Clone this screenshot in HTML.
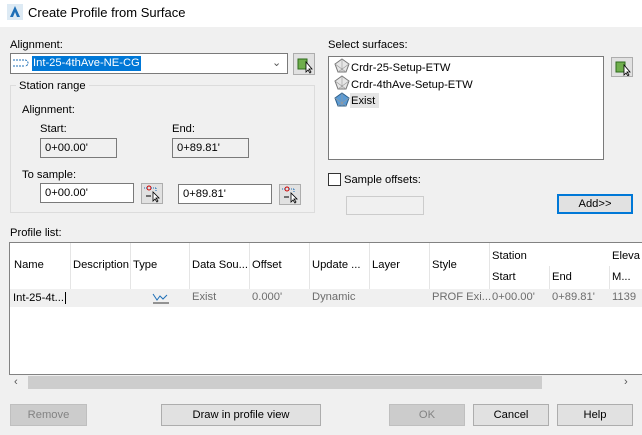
<!DOCTYPE html>
<html><head><style>
*{box-sizing:border-box;margin:0;padding:0}
body{width:642px;height:435px;background:#f0f0f0;font-family:"Liberation Sans",sans-serif;font-size:11.2px;color:#000;position:relative;overflow:hidden}
.a{position:absolute;white-space:nowrap}
.box{position:absolute;border:1px solid #7a7a7a;background:#fff}
.ro{position:absolute;border:1px solid #7a7a7a;background:#f0f0f0;padding:3px 0 0 4px}
.in{position:absolute;border:1px solid #7a7a7a;background:#fff;padding:3px 0 0 4px}
.btn{position:absolute;border:1px solid #adadad;background:#e1e1e1;text-align:center;line-height:20px}
.dis{color:#838383;background:#cccccc;border-color:#bfbfbf}
.ib{position:absolute;border:1px solid #adadad;background:#e1e1e1}
.th{position:absolute;top:0;height:46px;border-right:1px solid #e5e5e5}
.hl{position:absolute;top:16px}
.cell{position:absolute;top:48px;color:#6d6d6d}
</style></head><body>
<div class="a" style="left:0;top:0;width:642px;height:27px;background:#fff"></div>
<svg class="a" style="left:7px;top:4px" width="16" height="16"><rect width="16" height="16" fill="#1e6fb7" opacity=".15"/><path d="M3 13 L8 2 L13 13 L10 13 L8 8 L6 13Z" fill="#1e6fb7"/></svg>
<div class="a" style="left:28px;top:5px;font-size:13px">Create Profile from Surface</div>

<div class="a" style="left:10px;top:39px">Alignment:</div>
<div class="box" style="left:10px;top:53px;width:278px;height:21px"></div>
<svg class="a" style="left:13px;top:58px" width="18" height="10"><path d="M0 2H12M0 8H12M12 2A3 3 0 0 1 12 8" stroke="#1e6fb7" fill="none" stroke-dasharray="2 1"/></svg>
<div class="a" style="left:32px;top:56px;background:#0078d7;color:#fff;padding:0 1px;height:15px;line-height:15px">Int-25-4thAve-NE-CG</div>
<div class="a" style="left:272px;top:56px;color:#555">&#8964;</div>
<div class="ib" style="left:293px;top:53px;width:22px;height:22px"><svg width="20" height="20"><rect x="4" y="5" width="9" height="10" fill="#6fae4c" stroke="#2d6a1c"/><path d="M12 8 L12 18 L14 16 L16 19 L17 18 L15 15 L18 15Z" fill="#fff" stroke="#000" stroke-width=".8"/></svg></div>

<div class="a" style="left:10px;top:85px;width:305px;height:128px;border:1px solid #dcdcdc"></div>
<div class="a" style="left:16px;top:80px;background:#f0f0f0;padding:0 3px">Station range</div>
<div class="a" style="left:22px;top:104px">Alignment:</div>
<div class="a" style="left:40px;top:123px">Start:</div>
<div class="a" style="left:172px;top:123px">End:</div>
<div class="ro" style="left:40px;top:138px;width:77px;height:20px">0+00.00'</div>
<div class="ro" style="left:172px;top:138px;width:77px;height:20px">0+89.81'</div>
<div class="a" style="left:22px;top:169px">To sample:</div>
<div class="in" style="left:40px;top:183px;width:94px;height:20px">0+00.00'</div>
<div class="in" style="left:178px;top:184px;width:94px;height:20px">0+89.81'</div>
<div class="ib" style="left:141px;top:183px;width:22px;height:21px"><svg width="20" height="19"><circle cx="7" cy="4" r="2" fill="none" stroke="#c00"/><path d="M2 4H5M9 4H14M14 4V8" stroke="#1e6fb7" stroke-dasharray="1 1"/><path d="M4 12H9" stroke="#000"/><path d="M11 8V17L13 15 15 18 16 17 14 14H17Z" fill="#fff" stroke="#000" stroke-width=".8"/></svg></div>
<div class="ib" style="left:279px;top:184px;width:22px;height:21px"><svg width="20" height="19"><circle cx="7" cy="4" r="2" fill="none" stroke="#c00"/><path d="M2 4H5M9 4H14M14 4V8" stroke="#1e6fb7" stroke-dasharray="1 1"/><path d="M4 12H9" stroke="#000"/><path d="M11 8V17L13 15 15 18 16 17 14 14H17Z" fill="#fff" stroke="#000" stroke-width=".8"/></svg></div>

<div class="a" style="left:328px;top:39px">Select surfaces:</div>
<div class="box" style="left:328px;top:56px;width:276px;height:104px"></div>
<svg class="a" style="left:334px;top:58px" width="16" height="50"><g fill="#e6e6e6" stroke="#777"><path d="M8 1L15 6 12 14H4L1 6Z"/><path d="M8 18L15 23 12 31H4L1 23Z"/></g><path d="M8 35L15 40 12 48H4L1 40Z" fill="#5b9bd5" stroke="#2e5f8a"/><path d="M8 1V14M1 6L12 14M15 6L4 14M8 18V31M1 23L12 31M15 23L4 31M8 35V48M1 40L12 48M15 40L4 48" stroke="#999" stroke-width=".6"/></svg>
<div class="a" style="left:351px;top:62px">Crdr-25-Setup-ETW</div>
<div class="a" style="left:351px;top:79px">Crdr-4thAve-Setup-ETW</div>
<div class="a" style="left:350px;top:93px;background:#e5e5e5;padding:2px 4px 1px 1px">Exist</div>
<div class="ib" style="left:611px;top:57px;width:22px;height:20px"><svg width="20" height="18"><rect x="4" y="4" width="9" height="10" fill="#6fae4c" stroke="#2d6a1c"/><path d="M12 7 L12 17 L14 15 L16 18 L17 17 L15 14 L18 14Z" fill="#fff" stroke="#000" stroke-width=".8"/></svg></div>

<div class="a" style="left:328px;top:173px;width:13px;height:13px;border:1px solid #333;background:#fff"></div>
<div class="a" style="left:344px;top:174px">Sample offsets:</div>
<div class="a" style="left:346px;top:196px;width:78px;height:19px;border:1px solid #ccc;background:#f0f0f0"></div>
<div class="btn" style="left:557px;top:194px;width:76px;height:20px;border:2px solid #0078d7;line-height:16px">Add&gt;&gt;</div>

<div class="a" style="left:10px;top:227px">Profile list:</div>
<div class="a" style="left:9px;top:242px;width:640px;height:133px;border:1px solid #828282;border-right:none;background:#fff;overflow:hidden">
 <div class="th" style="left:0;width:61px"><span class="hl" style="left:4px">Name</span></div>
 <div class="th" style="left:61px;width:60px"><span class="hl" style="left:2px">Description</span></div>
 <div class="th" style="left:121px;width:59px"><span class="hl" style="left:2px">Type</span></div>
 <div class="th" style="left:180px;width:60px"><span class="hl" style="left:2px">Data Sou...</span></div>
 <div class="th" style="left:240px;width:60px"><span class="hl" style="left:2px">Offset</span></div>
 <div class="th" style="left:300px;width:60px"><span class="hl" style="left:2px">Update ...</span></div>
 <div class="th" style="left:360px;width:60px"><span class="hl" style="left:2px">Layer</span></div>
 <div class="th" style="left:420px;width:60px"><span class="hl" style="left:2px">Style</span></div>
 <div class="th" style="left:480px;width:120px;border-right:none"><span class="a" style="left:2px;top:7px">Station</span></div>
 <div class="th" style="left:480px;top:23px;height:23px;width:60px"><span class="a" style="left:2px;top:5px">Start</span></div>
 <div class="th" style="left:540px;top:23px;height:23px;width:60px"><span class="a" style="left:2px;top:5px">End</span></div>
 <div class="th" style="left:600px;width:60px;border-right:none"><span class="a" style="left:2px;top:7px">Eleva</span><span class="a" style="left:2px;top:28px">M...</span></div>
 <div class="a" style="left:0;top:46px;width:640px;height:18px;background:#f0f0f0"></div>
 <div class="a" style="left:3px;top:49px;border-right:1px solid #000;padding-right:1px">Int-25-4t...</div>
 <svg class="a" style="left:142px;top:49px" width="18" height="12"><path d="M1 2L5 8 8 4 11 7 15 3" stroke="#1e6fb7" fill="none"/><path d="M1 11H17" stroke="#333"/></svg>
 <span class="cell" style="left:182px">Exist</span>
 <span class="cell" style="left:242px">0.000'</span>
 <span class="cell" style="left:302px">Dynamic</span>
 <span class="cell" style="left:422px">PROF Exi...</span>
 <span class="cell" style="left:482px">0+00.00'</span>
 <span class="cell" style="left:542px">0+89.81'</span>
 <span class="cell" style="left:602px">1139</span>
</div>
<div class="a" style="left:9px;top:375px;width:633px;height:15px;background:#f0f0f0"></div>
<div class="a" style="left:14px;top:376px;color:#555">&#8249;</div>
<div class="a" style="left:28px;top:376px;width:514px;height:13px;background:#cdcdcd"></div>
<div class="a" style="left:624px;top:376px;color:#555">&#8250;</div>

<div class="btn dis" style="left:10px;top:404px;width:77px;height:22px">Remove</div>
<div class="btn" style="left:161px;top:404px;width:160px;height:22px">Draw in profile view</div>
<div class="btn dis" style="left:389px;top:404px;width:76px;height:22px">OK</div>
<div class="btn" style="left:473px;top:404px;width:76px;height:22px">Cancel</div>
<div class="btn" style="left:557px;top:404px;width:76px;height:22px">Help</div>
</body></html>
